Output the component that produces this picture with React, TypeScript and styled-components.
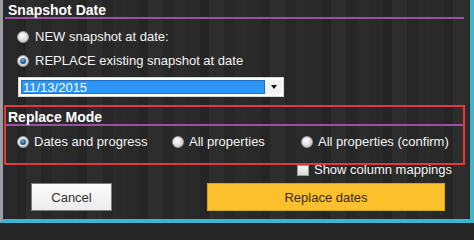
import styled, { createGlobalStyle } from "styled-components";

const GlobalStyle = createGlobalStyle`
  html, body {
    margin: 0;
    padding: 0;
    background: #262626;
  }
  body {
    font-family: "Liberation Sans", Arial, sans-serif;
  }
`;

const Frame = styled.div`
  box-sizing: border-box;
  width: 474px;
  height: 223px;
  border-left: 3px solid #9a9ea3;
  border-right: 4px solid #3fb4ca;
  border-bottom: 4px solid #3fb4ca;
  background: repeating-linear-gradient(
    90deg,
    #292929 0 14px,
    #252525 14px 23px,
    #2d2d2d 23px 38px,
    #272727 38px 49px,
    #2b2b2b 49px 61px
  );
  color: #f4f4f4;
  font-size: 13px;
  display: flex;
  flex-direction: column;
  overflow: hidden;
`;

const SectionHeader = styled.div<{ $inset?: boolean }>`
  margin: ${(p) => (p.$inset ? "0" : "0 6px 0 2px")};
  padding: 3px 0 0 ${(p) => (p.$inset ? "2px" : "3px")};
  height: 14px;
  line-height: 14px;
  font-size: 14px;
  font-weight: bold;
  color: #ffffff;
  border-bottom: 2px solid #a24ca9;
`;

const RadioList = styled.div`
  margin-top: 6px;
  padding-left: 14px;
  display: flex;
  flex-direction: column;
`;

const RadioRow = styled.label`
  display: flex;
  align-items: center;
  gap: 6px;
  height: 24px;
  line-height: 14px;
  white-space: nowrap;
`;

const RadioDot = styled.span<{ $checked?: boolean }>`
  flex: none;
  width: 12px;
  height: 12px;
  border-radius: 50%;
  box-sizing: border-box;
  border: 1px solid #9c9c9c;
  background: radial-gradient(circle at 40% 35%, #ffffff 0, #e4e4e4 45%, #bcbcbc 100%);
  display: flex;
  align-items: center;
  justify-content: center;

  &::after {
    content: "";
    display: ${(p) => (p.$checked ? "block" : "none")};
    width: 6px;
    height: 6px;
    border-radius: 50%;
    background: radial-gradient(circle at 40% 35%, #7fb6e6 0, #2a6aa3 45%, #173f66 100%);
  }
`;

const Combo = styled.div`
  margin: 4px 0 0 15px;
  width: 266px;
  height: 20px;
  box-sizing: border-box;
  background: #ffffff;
  border: 1px solid #d8d8d8;
  padding: 2px 1px 2px 2px;
  display: flex;
`;

const ComboValue = styled.div`
  flex: 1;
  background: #2f95f4;
  border: 1px solid #2470c0;
  color: #ffffff;
  line-height: 14px;
  padding-left: 1px;
`;

const ComboArrow = styled.div`
  width: 17px;
  display: flex;
  align-items: center;
  justify-content: center;
  background: #f3f3f3;

  &::after {
    content: "";
    border-left: 3px solid transparent;
    border-right: 3px solid transparent;
    border-top: 4px solid #111111;
  }
`;

const ModeBox = styled.div`
  margin: 8px 5px 0 1px;
  border: 2px solid #e3393c;
  padding-bottom: 10px;
`;

const ModeOptions = styled.div`
  margin-top: 4px;
  padding-left: 11px;
  display: grid;
  grid-template-columns: 155px 129px auto;
  height: 23px;
  align-items: center;
`;

const ModeOption = styled.label`
  display: flex;
  align-items: center;
  gap: 5px;
  white-space: nowrap;
  line-height: 14px;
`;

const CheckRow = styled.div`
  margin-top: -2px;
  height: 14px;
  padding-right: 18px;
  display: flex;
  justify-content: flex-end;
  align-items: center;
  gap: 5px;
  line-height: 14px;
`;

const CheckBox = styled.span`
  width: 12px;
  height: 11px;
  box-sizing: border-box;
  border: 1px solid #9a9a9a;
  background: linear-gradient(#f4f4f4, #d9d9d9);
`;

const ButtonRow = styled.div`
  margin-top: 6px;
  padding-left: 28px;
  display: flex;
  gap: 95px;
`;

const Button = styled.button<{ $primary?: boolean }>`
  height: 28px;
  width: ${(p) => (p.$primary ? "238px" : "81px")};
  box-sizing: border-box;
  border: 1px solid ${(p) => (p.$primary ? "#d8a21e" : "#7d7d7d")};
  background: ${(p) => (p.$primary ? "#fcc02c" : "linear-gradient(#fbfbfb, #ececec)")};
  color: ${(p) => (p.$primary ? "#3a2c0c" : "#333333")};
  font-family: "Liberation Sans", Arial, sans-serif;
  font-size: 13px;
  padding: 0;
`;

export default function App() {
  return (
    <>
      <GlobalStyle />
      <Frame>
        <SectionHeader>Snapshot Date</SectionHeader>
        <RadioList>
          <RadioRow>
            <RadioDot />
            NEW snapshot at date:
          </RadioRow>
          <RadioRow>
            <RadioDot $checked />
            REPLACE existing snapshot at date
          </RadioRow>
        </RadioList>
        <Combo>
          <ComboValue>11/13/2015</ComboValue>
          <ComboArrow />
        </Combo>

        <ModeBox>
          <SectionHeader $inset>Replace Mode</SectionHeader>
          <ModeOptions>
            <ModeOption>
              <RadioDot $checked />
              Dates and progress
            </ModeOption>
            <ModeOption>
              <RadioDot />
              All properties
            </ModeOption>
            <ModeOption>
              <RadioDot />
              All properties (confirm)
            </ModeOption>
          </ModeOptions>
        </ModeBox>

        <CheckRow>
          <CheckBox />
          Show column mappings
        </CheckRow>

        <ButtonRow>
          <Button>Cancel</Button>
          <Button $primary>Replace dates</Button>
        </ButtonRow>
      </Frame>
    </>
  );
}
